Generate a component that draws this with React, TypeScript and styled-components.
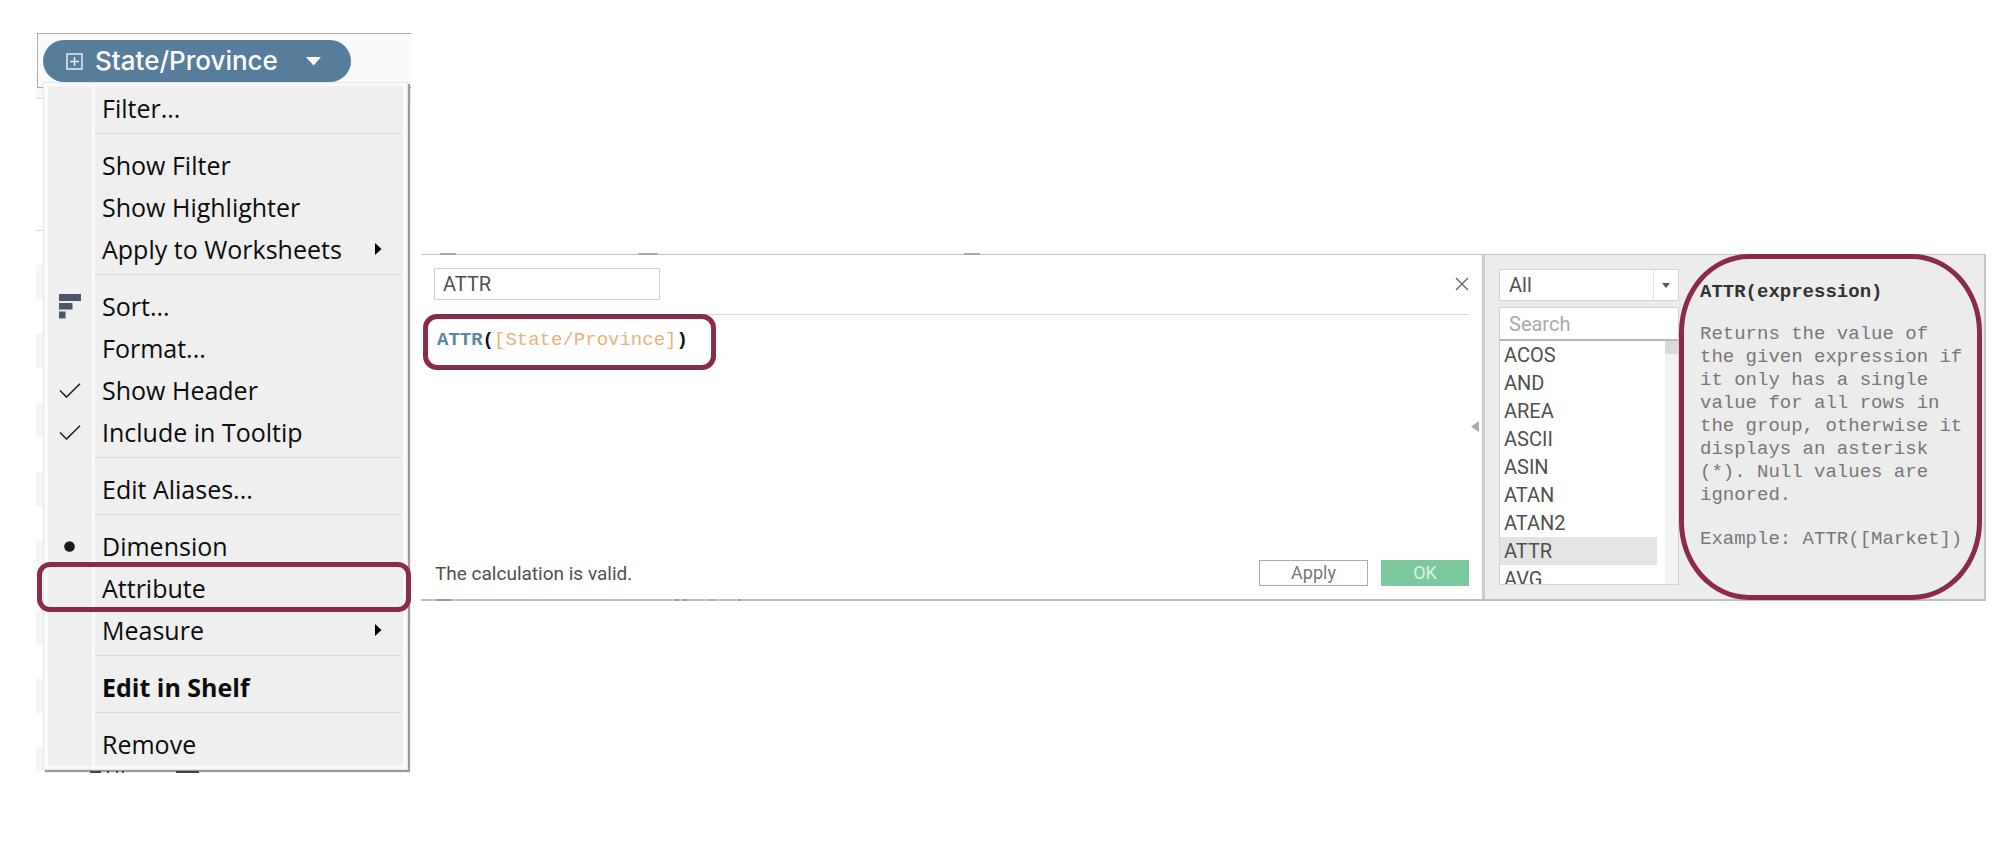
import React from "react";
import styled, { createGlobalStyle, css } from "styled-components";

const maroon = "#8c2a4d";

const GlobalStyle = createGlobalStyle`
  *, *::before, *::after { box-sizing: border-box; }
  body { margin: 0; background: #fff; }
  button, input, select { font: inherit; color: inherit; }
`;

const Page = styled.main`
  display: flex;
  align-items: flex-start;
  gap: 10px;
  padding: 33px 14px 60px 36px;
  font-family: Roboto, "Liberation Sans", sans-serif;
`;

/* ---------- Pill and its context menu ---------- */

const ShelfColumn = styled.section`
  position: relative;
  flex: 0 0 375px;
  padding-bottom: 1px;
  background:
    linear-gradient(#dcdcdc, #dcdcdc) 0 65px / 100% 1px no-repeat,
    linear-gradient(#f6f6f6, #f6f6f6) 0 55px / 100% 10px no-repeat,
    linear-gradient(#d8d8d8, #d8d8d8) 0 197px / 7px 1px no-repeat,
    linear-gradient(#fff, #fff) 0 0 / 100% 231px no-repeat,
    repeating-linear-gradient(#fff 0 25px, #f5f5f5 25px 59px, #fff 59px 69px) 0 0 / 7px 100% no-repeat;
`;

const Shelf = styled.div`
  height: 55px;
  padding: 6px;
  margin-left: 1px;
  border: 1px solid #a9a9a9;
  border-right: 0;
  background: #fafafa;
`;

const Pill = styled.button`
  display: flex;
  align-items: center;
  width: 308px;
  height: 42px;
  margin-left: -1px;
  padding: 0 30px 0 23px;
  border: 0;
  border-radius: 21px;
  background: #567d9b;
  color: #fff;
  font-family: Inter, sans-serif;
  font-size: 26px;
  font-weight: 500;
  line-height: 42px;
  white-space: nowrap;
`;

const PillLabel = styled.span`
  flex: 1;
  margin-left: 12px;
  text-align: left;
`;

const Menu = styled.div`
  position: relative;
  margin: -6px 3px 0 7px;
  padding: 3px 4px;
  border: 1px solid #e6e6e6;
  background: #fafafa;
  box-shadow: 2px 2px 1px #9c9c9c;
`;

const MenuBody = styled.div`
  padding: 2px 0 0;
  background: linear-gradient(90deg, #efefef 44px, #fafafa 44px 47px, #efefef 47px);
`;

const MenuItem = styled.button<{ $bold?: boolean }>`
  position: relative;
  display: grid;
  grid-template-columns: 54px 1fr 20px;
  align-items: center;
  width: 100%;
  height: 42px;
  padding: 0 8px 2px 0;
  border: 0;
  background: none;
  color: #0c0c0c;
  font-family: "Open Sans", "Noto Sans", sans-serif;
  font-size: 25px;
  font-weight: ${(p) => (p.$bold ? 700 : 400)};
  line-height: 40px;
  text-align: left;
  white-space: nowrap;
`;

const IconSlot = styled.span`
  display: flex;
  justify-content: center;
  width: 43px;
`;

const Separator = styled.hr`
  height: 1px;
  margin: 3px 2px 11px 47px;
  border: 0;
  background: #d9d9d9;
`;

const ringStyle = css`
  border: 5px solid ${maroon};
`;

const ItemRing = styled.span`
  ${ringStyle}
  position: absolute;
  inset: -6px -8px -2px -11px;
  border-radius: 13px;
  pointer-events: none;
`;

const ClippedEdge = styled.svg`
  position: absolute;
  left: 54px;
  bottom: -2px;
`;

/* ---------- Calculation editor ---------- */

const Dialog = styled.section`
  position: relative;
  display: flex;
  flex: 1;
  min-width: 0;
  margin-top: 221px;
  border-top: 1px solid #c6c6c6;
  border-bottom: 2px solid #c0c0c0;
  border-right: 2px solid #c4c4c4;
  color: #505050;
`;

const Editor = styled.div`
  display: flex;
  flex: 1;
  flex-direction: column;
  min-width: 0;
  padding: 13px 13px 13px 2px;
  border-right: 3px solid #cccccc;
  background: #fff;
`;

const TitleBar = styled.header`
  display: flex;
  align-items: center;
  justify-content: space-between;
  margin-left: 11px;
  padding-bottom: 14px;
  border-bottom: 1px solid #d6d6d6;
`;

const NameInput = styled.input`
  width: 226px;
  height: 32px;
  padding: 0 8px;
  border: 1px solid #d2d2d2;
  background: #fff;
  font-size: 20px;
`;

const PlainButton = styled.button`
  display: flex;
  padding: 0;
  border: 0;
  background: none;
`;

const Formula = styled.code`
  ${ringStyle}
  align-self: flex-start;
  height: 56px;
  margin-top: -1px;
  padding: 0 23px 0 9px;
  border-radius: 14px;
  background: #fff;
  color: #111;
  font-family: "Liberation Mono", "Courier New", monospace;
  font-size: 19px;
  line-height: 42px;
  white-space: nowrap;
`;

const Fn = styled.b`
  color: #5a87a6;
`;

const Field = styled.span`
  color: #e9b27c;
`;

const Collapse = styled(PlainButton)`
  align-self: flex-end;
  margin: 51px -10px auto;
`;

const Footer = styled.footer`
  display: flex;
  align-items: center;
  gap: 13px;
  margin-left: 12px;
`;

const Status = styled.span`
  flex: 1;
  font-size: 19px;
`;

const ActionButton = styled.button<{ $primary?: boolean }>`
  width: ${(p) => (p.$primary ? 88 : 109)}px;
  height: 26px;
  padding: 0;
  border: 1px solid ${(p) => (p.$primary ? "#7bc99c" : "#acacac")};
  background: ${(p) => (p.$primary ? "#7bc99c" : "#fff")};
  color: ${(p) => (p.$primary ? "#dcf3e6" : "#777")};
  font-size: 18px;
  line-height: 24px;
`;

/* ---------- Function reference ---------- */

const Sidebar = styled.aside`
  display: flex;
  flex: 0 0 499px;
  padding: 0 2px 0 14px;
  background: #ececec;
`;

const FunctionColumn = styled.div`
  flex: 0 0 180px;
  padding: 14px 0;
`;

const SelectWrap = styled.label`
  position: relative;
  display: block;
  margin-bottom: 6px;
`;

const CategorySelect = styled.select`
  appearance: none;
  display: block;
  width: 100%;
  height: 32px;
  padding: 0 9px;
  border: 1px solid #d2d2d2;
  border-radius: 0;
  background: #fff;
  font-size: 20px;
`;

const SelectArrow = styled.span`
  position: absolute;
  inset: 1px 1px 1px auto;
  display: flex;
  align-items: center;
  justify-content: center;
  width: 25px;
  border-left: 1px solid #e2e2e2;
  pointer-events: none;
`;

const SearchInput = styled.input`
  display: block;
  width: 100%;
  height: 34px;
  padding: 0 9px;
  border: 1px solid #d2d2d2;
  border-bottom: 2px solid #b8b8b8;
  background: #fff;
  font-size: 20px;
  &::placeholder { color: #aaa; opacity: 1; }
`;

const ListFrame = styled.div`
  display: flex;
  height: 244px;
  overflow: hidden;
  border: solid #d2d2d2;
  border-width: 0 1px 1px;
  background: #fff;
`;

const FunctionList = styled.ul`
  flex: 1;
  margin: 0;
  padding: 0 8px 0 0;
  list-style: none;
`;

const FunctionItem = styled.button<{ $selected?: boolean }>`
  display: block;
  width: 100%;
  height: 28px;
  padding: 0 4px;
  border: 0;
  background: ${(p) => (p.$selected ? "#e4e4e4" : "none")};
  font-size: 20px;
  line-height: 28px;
  text-align: left;
`;

const ScrollTrack = styled.div`
  width: 13px;
  background: #f3f3f3;
`;

const ScrollThumb = styled.div`
  height: 13px;
  background: #dadada;
`;

const Doc = styled.article`
  ${ringStyle}
  flex: 1;
  margin: -1px 0;
  padding: 22px 4px 0 16px;
  border-radius: 70px / 78px;
  color: #777;
  font-family: "Liberation Mono", "Courier New", monospace;
  font-size: 19px;
  line-height: 23px;
`;

const DocTitle = styled.h2`
  margin: 0 0 19px;
  color: #333;
  font-size: 19px;
  line-height: 23px;
`;

const DocText = styled.p`
  margin: 0 0 21px;
`;

const EdgeMarks = styled.svg<{ $bottom?: boolean }>`
  position: absolute;
  left: 0;
  ${(p) => (p.$bottom ? "bottom: -2px;" : "top: -2px;")}
`;

/* ---------- Icons ---------- */

const ExpandIcon = () => (
  <svg width="17" height="17" viewBox="0 0 17 17" fill="none" stroke="#e8f0f5" strokeWidth="1.5" aria-hidden="true">
    <rect x="1" y="1" width="15" height="15" />
    <path d="M8.500 4V13M4 8.500H13" />
  </svg>
);

const CaretIcon = () => (
  <svg width="15" height="9" viewBox="0 0 15 9" aria-hidden="true">
    <path d="M0 0H15L7.500 8.500Z" fill="#fff" />
  </svg>
);

const SortIcon = () => (
  <svg width="22" height="25" viewBox="0 0 22 25" fill="#4b566a" aria-hidden="true">
    <path d="M0 0H22V7H0ZM0 9H13.500V15.500H0ZM0 17.500H6.500V24.500H0Z" />
  </svg>
);

const CheckIcon = () => (
  <svg width="22" height="15" viewBox="0 0 22 15" fill="none" stroke="#222" strokeWidth="1.6" aria-hidden="true">
    <path d="M1 7.500L7.500 14L21 .8" />
  </svg>
);

const DotIcon = () => (
  <svg width="11" height="11" viewBox="0 0 11 11" aria-hidden="true">
    <circle cx="5.500" cy="5.500" r="5.300" fill="#1a1a1a" />
  </svg>
);

const SubmenuIcon = () => (
  <svg width="7" height="12" viewBox="0 0 7 12" aria-hidden="true">
    <path d="M0 0L6.500 6L0 12Z" fill="#000" />
  </svg>
);

const menuIcons = { sort: SortIcon, check: CheckIcon, dot: DotIcon };

type Entry = {
  label: string;
  icon?: keyof typeof menuIcons;
  submenu?: boolean;
  bold?: boolean;
  ringed?: boolean;
};

const menuGroups: Entry[][] = [
  [{ label: "Filter..." }],
  [{ label: "Show Filter" }, { label: "Show Highlighter" }, { label: "Apply to Worksheets", submenu: true }],
  [
    { label: "Sort...", icon: "sort" },
    { label: "Format..." },
    { label: "Show Header", icon: "check" },
    { label: "Include in Tooltip", icon: "check" },
  ],
  [{ label: "Edit Aliases..." }],
  [
    { label: "Dimension", icon: "dot" },
    { label: "Attribute", ringed: true },
    { label: "Measure", submenu: true },
  ],
  [{ label: "Edit in Shelf", bold: true }],
  [{ label: "Remove" }],
];

const functions = ["ACOS", "AND", "AREA", "ASCII", "ASIN", "ATAN", "ATAN2", "ATTR", "AVG"];

function MenuEntry({ label, icon, submenu, bold, ringed }: Entry) {
  const Icon = icon ? menuIcons[icon] : null;
  return (
    <MenuItem type="button" role="menuitem" $bold={bold}>
      <IconSlot>{Icon && <Icon />}</IconSlot>
      <span>{label}</span>
      {submenu && <SubmenuIcon />}
      {ringed && <ItemRing />}
    </MenuItem>
  );
}

export default function App() {
  return (
    <>
      <GlobalStyle />
      <Page>
        <ShelfColumn>
          <Shelf>
            <Pill type="button">
              <ExpandIcon />
              <PillLabel>State/Province</PillLabel>
              <CaretIcon />
            </Pill>
          </Shelf>
          <Menu role="menu">
            <MenuBody>
              {menuGroups.map((group, i) => (
                <React.Fragment key={i}>
                  {i > 0 && <Separator />}
                  {group.map((entry) => (
                    <MenuEntry key={entry.label} {...entry} />
                  ))}
                </React.Fragment>
              ))}
            </MenuBody>
          </Menu>
          <ClippedEdge width="112" height="2" viewBox="0 0 112 2" fill="#444" aria-hidden="true">
            <path d="M0 0H11V2H0ZM17 0H19V2H17ZM26 0H28V2H26ZM32 0H34V2H32ZM86 0H109V2H86Z" />
          </ClippedEdge>
        </ShelfColumn>

        <Dialog>
          <Editor>
            <TitleBar>
              <NameInput aria-label="Calculation name" defaultValue="ATTR" />
              <PlainButton type="button" aria-label="Close">
                <svg width="14" height="14" viewBox="0 0 14 14" stroke="#666" strokeWidth="1.4" aria-hidden="true">
                  <path d="M1 1L13 13M13 1L1 13" />
                </svg>
              </PlainButton>
            </TitleBar>
            <Formula>
              <Fn>ATTR</Fn>
              <b>(</b>
              <Field>[State/Province]</Field>
              <b>)</b>
            </Formula>
            <Collapse type="button" aria-label="Collapse function list">
              <svg width="8" height="11" viewBox="0 0 8 11" aria-hidden="true">
                <path d="M8 0V11L0 5.500Z" fill="#aaa" />
              </svg>
            </Collapse>
            <Footer>
              <Status>The calculation is valid.</Status>
              <ActionButton type="button">Apply</ActionButton>
              <ActionButton type="button" $primary>OK</ActionButton>
            </Footer>
          </Editor>
          <Sidebar>
            <FunctionColumn>
              <SelectWrap>
                <CategorySelect aria-label="Function category" defaultValue="All">
                  <option>All</option>
                </CategorySelect>
                <SelectArrow>
                  <svg width="8" height="5" viewBox="0 0 8 5" aria-hidden="true">
                    <path d="M0 0H8L4 5Z" fill="#555" />
                  </svg>
                </SelectArrow>
              </SelectWrap>
              <SearchInput aria-label="Search functions" placeholder="Search" />
              <ListFrame>
                <FunctionList>
                  {functions.map((name) => (
                    <li key={name}>
                      <FunctionItem type="button" $selected={name === "ATTR"}>{name}</FunctionItem>
                    </li>
                  ))}
                </FunctionList>
                <ScrollTrack>
                  <ScrollThumb />
                </ScrollTrack>
              </ListFrame>
            </FunctionColumn>
            <Doc>
              <DocTitle>ATTR(expression)</DocTitle>
              <DocText>
                Returns the value of the given expression if it only has a single value for all rows in the group,
                otherwise it displays an asterisk (*). Null values are ignored.
              </DocText>
              <DocText>Example: ATTR([Market])</DocText>
            </Doc>
          </Sidebar>
          <EdgeMarks width="560" height="2" viewBox="0 0 560 2" fill="#aaa" aria-hidden="true">
            <path d="M19 0H35V2H19ZM217 0H237V2H217ZM543 0H559V2H543Z" />
          </EdgeMarks>
          <EdgeMarks $bottom width="560" height="2" viewBox="0 0 560 2" fill="#999" aria-hidden="true">
            <path d="M15 0H30V2H15ZM254 0H258V2H254ZM262 0H266V2H262ZM290 0H292V2H290ZM317 0H319V2H317Z" />
          </EdgeMarks>
        </Dialog>
      </Page>
    </>
  );
}
